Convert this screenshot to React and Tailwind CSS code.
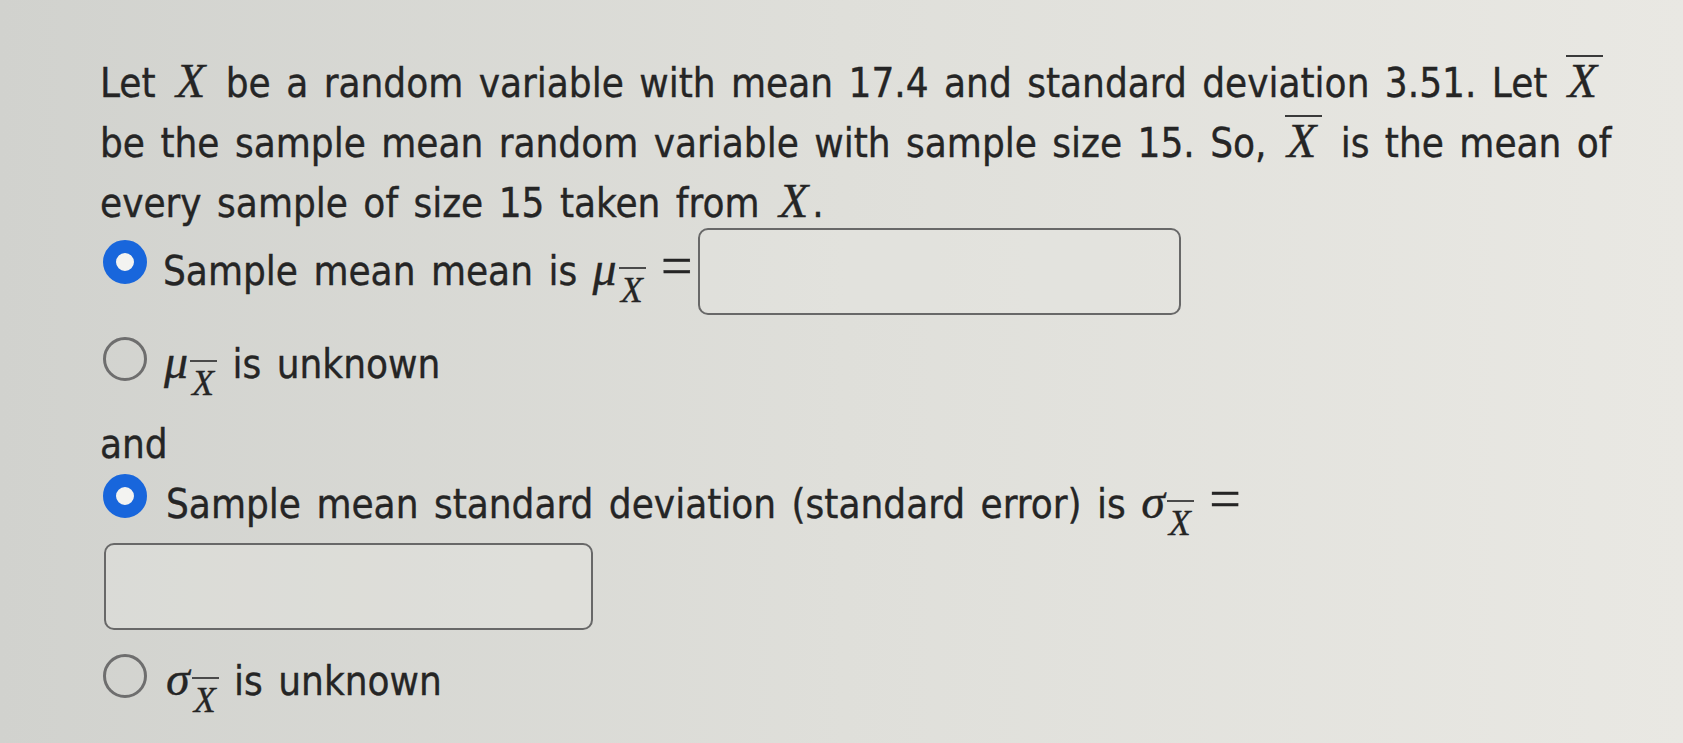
import React from 'react';

// serif italic math letters, the way the page's math renderer draws them
function Mi({ children, className = '' }) {
  return <span className={`${className} font-['Liberation_Serif',serif] text-[48px] italic leading-none`}>{children}</span>;
}

function XBar({ small }) {
  if (small) {
    return (
      <span className="-mb-[10px] ml-[2px] inline-block border-t-2 border-[#4a4a4a] pt-[3px] pl-[2px] pr-[3px] align-[-17px] font-['Liberation_Serif',serif] text-[36px] italic leading-none">
        X
      </span>
    );
  }
  return (
    <span className="mx-[3px] inline-block border-t-2 border-[#3a3a3a] pl-[2px] pr-[6px] font-['Liberation_Serif',serif] text-[48px] italic leading-none">
      X
    </span>
  );
}

function Equals() {
  return <span className="font-['Liberation_Serif',serif] text-[56px] leading-none">=</span>;
}

function Radio({ checked, className }) {
  if (checked) {
    return <span className={`${className} block h-[44px] w-[44px] shrink-0 rounded-full border-[13px] border-[#1866dc] bg-[#f3f3f1]`} />;
  }
  return <span className={`${className} block h-[44px] w-[44px] shrink-0 rounded-full border-[3px] border-[#6e6e6e]`} />;
}

function AnswerBox({ className }) {
  return <div className={`${className} h-[87px] rounded-[10px] border-2 border-[#686868] bg-[#e7e7e2]/40`} />;
}

export default function App() {
  return (
    <div className="min-h-screen w-full bg-gradient-to-r from-[#d1d2ce] via-[#dfdfda] to-[#e9e8e3] font-['DejaVu_Sans_Condensed','DejaVu_Sans',sans-serif] text-[40px] text-[#252525] font-stretch-condensed [-webkit-text-stroke:0.35px] [word-spacing:4px]">
      <div className="pl-[100px] pt-[53px] pb-[40px]">
        <p className="leading-[60px]">
          Let <Mi className="mx-[5px]">X</Mi> be a random variable with mean 17.4 and standard deviation 3.51. Let <XBar />
          <br />
          be the sample mean random variable with sample size 15. So, <XBar /> is the mean of
          <br />
          every sample of size 15 taken from <Mi className="mx-[4px]">X</Mi>.
        </p>

        <div className="-mt-[5px] flex items-start">
          <Radio checked className="ml-[3px] mt-[12px]" />
          <span className="ml-[16px] mt-[10px] leading-[60px]">
            Sample mean mean is <Mi>μ</Mi>
            <XBar small /> <Equals />
          </span>
          <AnswerBox className="ml-[5px] w-[483px]" />
        </div>

        <div className="mt-[19px] flex items-start">
          <Radio className="ml-[3px] mt-[3px]" />
          <span className="ml-[17px] leading-[60px]">
            <Mi>μ</Mi>
            <XBar small /> is unknown
          </span>
        </div>

        <p className="mt-[20px] leading-[60px]">and</p>

        <div className="-mt-[3px] flex items-start">
          <Radio checked className="ml-[3px] mt-[3px]" />
          <span className="ml-[19px] leading-[60px]">
            Sample mean standard deviation (standard error) is <Mi>σ</Mi>
            <XBar small /> <Equals />
          </span>
        </div>

        <AnswerBox className="ml-[4px] mt-[9px] w-[489px]" />

        <div className="mt-[21px] flex items-start">
          <Radio className="ml-[3px] mt-[3px]" />
          <span className="ml-[19px] leading-[60px]">
            <Mi>σ</Mi>
            <XBar small /> is unknown
          </span>
        </div>
      </div>
    </div>
  );
}
